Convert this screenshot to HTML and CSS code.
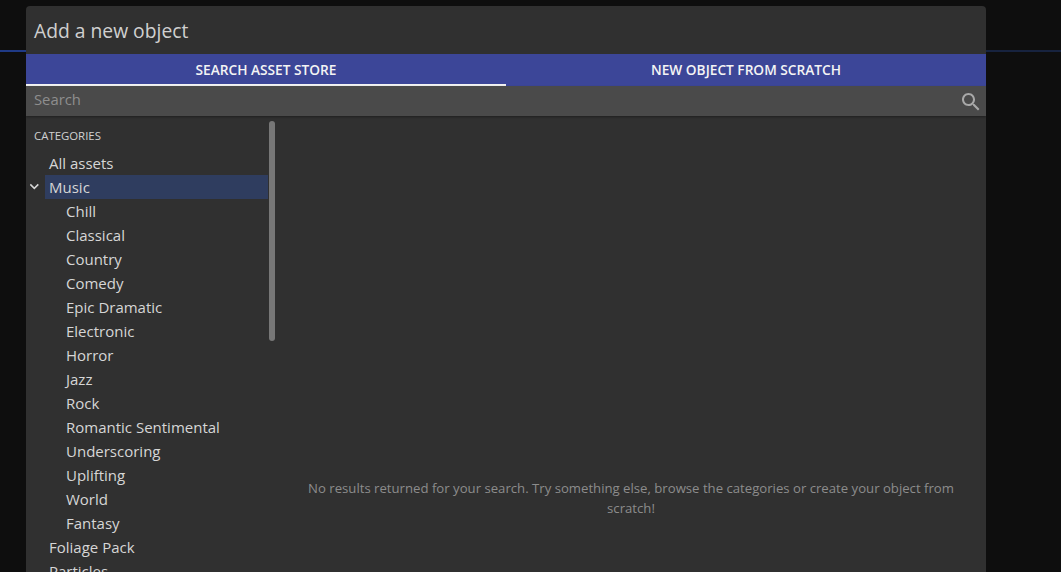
FILE: index.html
```html
<!DOCTYPE html>
<html lang="en">
<head>
<meta charset="utf-8">
<title>Add a new object</title>
<link rel="stylesheet" href="styles.css">
</head>
<body>
<div class="backdrop-line"></div>
<main class="dialog">
  <h1 class="title">Add a new object</h1>
  <nav class="tabs">
    <div class="tab active">SEARCH ASSET STORE</div>
    <div class="tab">NEW OBJECT FROM SCRATCH</div>
  </nav>
  <div class="search">
    <span class="placeholder">Search</span>
    <svg class="search-icon" width="24" height="24" viewBox="0 0 24 24"><path fill="currentColor" d="M15.5 14h-.79l-.28-.27C15.41 12.59 16 11.11 16 9.5 16 5.91 13.09 3 9.5 3S3 5.91 3 9.5 5.91 16 9.5 16c1.61 0 3.09-.59 4.23-1.57l.27.28v.79l5 4.99L20.49 19l-4.99-5zm-6 0C7.01 14 5 11.99 5 9.5S7.01 5 9.5 5 14 7.01 14 9.5 11.99 14 9.5 14z"/></svg>
  </div>
  <div class="body">
    <aside class="sidebar">
      <div class="cat-head">CATEGORIES</div>
      <ul class="tree">
        <li class="row">All assets</li>
        <li class="row selected">
          <svg class="chevron" width="12" height="12" viewBox="0 0 12 12"><path d="M2.3 3.4 6.3 7.4l4-4" fill="none" stroke="currentColor" stroke-width="1.5"/></svg>
          <span class="row-label">Music</span>
        </li>
        <li class="row sub">Chill</li>
        <li class="row sub">Classical</li>
        <li class="row sub">Country</li>
        <li class="row sub">Comedy</li>
        <li class="row sub">Epic Dramatic</li>
        <li class="row sub">Electronic</li>
        <li class="row sub">Horror</li>
        <li class="row sub">Jazz</li>
        <li class="row sub">Rock</li>
        <li class="row sub">Romantic Sentimental</li>
        <li class="row sub">Underscoring</li>
        <li class="row sub">Uplifting</li>
        <li class="row sub">World</li>
        <li class="row sub">Fantasy</li>
        <li class="row">Foliage Pack</li>
        <li class="row">Particles</li>
      </ul>
      <div class="scrollbar"></div>
    </aside>
    <section class="results">
      <p class="empty">No results returned for your search. Try something else, browse the categories or create your object from scratch!</p>
    </section>
  </div>
</main>
</body>
</html>
```
FILE: styles.css
```css
* { box-sizing: border-box; }
html, body { height: 100%; }
body {
  margin: 0;
  background: #0e0e0e;
  overflow: hidden;
  font-family: "Open Sans", "Noto Sans", sans-serif;
  color: #d6d6d6;
  padding: 6px 0 0 26px;
}
.backdrop-line {
  position: absolute;
  left: 0; right: 0; top: 50px;
  height: 2px;
  background: linear-gradient(to right, #1f3a86 0 26px, #17233f 986px);
}
.dialog {
  position: relative;
  width: 960px;
  height: 566px;
  overflow: hidden;
  background: #303030;
  border-radius: 4px 4px 0 0;
  display: flex;
  flex-direction: column;
}
.title {
  margin: 0;
  height: 48px;
  padding: 0 8px;
  font-size: 19.3px;
  font-weight: 400;
  line-height: 50px;
  color: #d0d0d0;
}
.tabs { display: flex; height: 32px; background: #3c4698; }
.tab {
  flex: 1;
  text-align: center;
  font-size: 13.7px;
  font-weight: 600;
  line-height: 31px;
  color: #f4f4f4;
}
.tab.active { border-bottom: 2px solid #f2f2f2; }
.search {
  height: 30px;
  background: #4a4a4a;
  display: flex;
  align-items: center;
  justify-content: space-between;
  padding: 0 3px 0 8px;
  box-shadow: 0 1px 2px rgba(0,0,0,.35);
  position: relative;
}
.placeholder { font-size: 14.8px; line-height: 20px; margin-top: -4px; color: #8e8e8e; }
.search-icon { color: #a8a8a8; margin-top: 1px; }
.body { flex: 1; display: flex; min-height: 0; }
.sidebar { position: relative; width: 250px; padding-top: 10px; }
.cat-head { font-size: 11.4px; line-height: 20px; padding-left: 8px; color: #d0d0d0; }
.tree { list-style: none; margin: 5px 0 0; padding: 0; }
.row {
  height: 24px;
  line-height: 24px;
  font-size: 15px;
  padding-left: 23px;
  color: #d6d6d6;
  white-space: nowrap;
}
.row.sub { padding-left: 40px; }
.row.selected { display: flex; padding-left: 2px; }
.chevron { margin: 6px 5px 0 0; flex: none; color: #d6d6d6; }
.row-label { flex: none; width: 223px; background: #2f3d5f; padding-left: 4px; }
.scrollbar {
  position: absolute;
  left: 243px; top: 5px;
  width: 6px; height: 220px;
  background: #777;
  border-radius: 3px;
}
.results { flex: 1; padding: 362px 30px 0 30px; }
.empty {
  margin: 0;
  text-align: center;
  font-size: 13.17px;
  line-height: 20px;
  color: #8c8c8c;
}
```
